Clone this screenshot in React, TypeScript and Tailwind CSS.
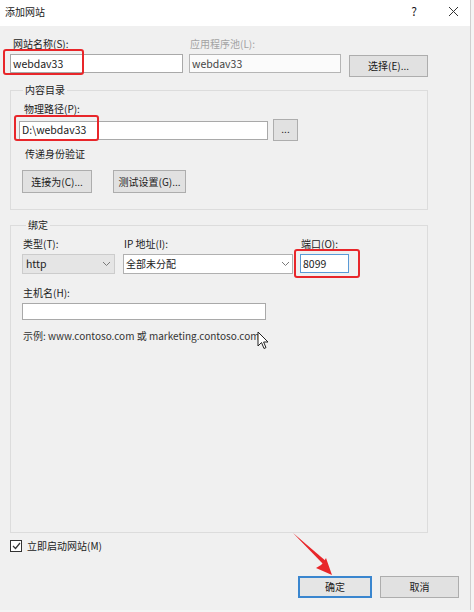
import React from "react";

const font = { fontFamily: '"Noto Sans CJK SC", "Noto Sans", sans-serif' };

function Btn({ children, className = "" }: { children: React.ReactNode; className?: string }) {
  return (
    <div
      className={
        "flex items-center justify-center border border-[#adadad] bg-[#e1e1e1] text-[10px] text-[#1a1a1a] " +
        className
      }
    >
      {children}
    </div>
  );
}

function Chevron() {
  return (
    <svg width="9" height="6" viewBox="0 0 9 6" className="text-[#7a7a7a]">
      <path d="M1 1 L4.5 4.5 L8 1" fill="none" stroke="currentColor" strokeWidth="1" />
    </svg>
  );
}

export default function App() {
  return (
    <div className="relative w-[474px] h-[612px] bg-[#f4f4f4] overflow-hidden text-[#1a1a1a]" style={font}>
      <div className="flex flex-col w-[471px] h-[610px] border-r border-[#cfcfcf]">
        {/* title bar */}
        <div className="flex items-center h-[26px] bg-white pl-[5px] text-[10px]">
          <span className="flex-1 pb-[4px]">添加网站</span>
          <span className="w-[10px] text-center text-[12px] pb-[4px] mr-[29px]">?</span>
          <svg width="11" height="11" viewBox="0 0 11 11" className="mr-[11px] mb-[4px]">
            <path d="M1 1 L10 10 M10 1 L1 10" stroke="#333" strokeWidth="1" />
          </svg>
        </div>

        {/* body */}
        <div className="flex-1 bg-[#f0f0f0] pl-[10px] pr-[11px] pt-[11px] text-[10px] leading-[14px] text-[#222]">
          {/* site name / pool */}
          <div className="flex items-start">
            <div className="w-[173px]">
              <div className="pl-[3px] h-[14px]">网站名称(S):</div>
              <div className="mt-[3px] h-[19px] border border-[#a9a9a9] bg-white pl-[2px] flex items-center text-[10.5px]">
                webdav33
              </div>
            </div>
            <div className="ml-[6px] w-[152px]">
              <div className="pl-[1px] h-[14px] text-[#a3a3a3]">应用程序池(L):</div>
              <div className="mt-[3px] h-[19px] border border-[#b5b5b5] bg-[#fbfbfb] pl-[2px] flex items-center text-[10.5px] text-[#444]">
                webdav33
              </div>
            </div>
            <Btn className="ml-[8px] mt-[18px] w-[79px] h-[22px]">选择(E)...</Btn>
          </div>

          {/* content directory */}
          <fieldset className="mt-[6px] w-[418px] border border-[#dcdcdc] pl-[8px] pb-[16px]">
            <legend className="ml-[4px] px-[2px] leading-[14px]">内容目录</legend>
            <div className="mt-[5px] pl-[5px] h-[14px]">物理路径(P):</div>
            <div className="mt-[3px] flex items-center">
              <div className="w-[249px] h-[19px] border border-[#a9a9a9] bg-white pl-[2px] flex items-center text-[10.5px]">
                D:\webdav33
              </div>
              <Btn className="ml-[5px] w-[25px] h-[22px] pb-[3px]">...</Btn>
            </div>
            <div className="mt-[6px] pl-[6px] h-[14px]">传递身份验证</div>
            <div className="mt-[9px] flex">
              <Btn className="ml-[3px] w-[70px] h-[23px]">连接为(C)...</Btn>
              <Btn className="ml-[21px] w-[73px] h-[23px]">测试设置(G)...</Btn>
            </div>
          </fieldset>

          {/* binding */}
          <fieldset className="mt-[8px] w-[418px] h-[315px] border border-[#dcdcdc] pl-[11px]">
            <legend className="ml-[4px] px-[2px] leading-[14px]">绑定</legend>
            <div className="mt-[5px] flex items-start">
              <div className="w-[93px]">
                <div className="pl-[1px] h-[14px]">类型(T):</div>
                <div className="mt-[3px] h-[20px] border border-[#cccccc] bg-[#e5e5e5] pl-[3px] pr-[3px] flex items-center justify-between text-[10.5px]">
                  <span>http</span>
                  <Chevron />
                </div>
              </div>
              <div className="ml-[8px] w-[170px]">
                <div className="pl-[1px] h-[14px]">IP 地址(I):</div>
                <div className="mt-[3px] h-[20px] border border-[#b0b0b0] bg-white pl-[2px] pr-[2px] flex items-center justify-between">
                  <span>全部未分配</span>
                  <Chevron />
                </div>
              </div>
              <div className="ml-[7px] w-[49px]">
                <div className="pl-[1px] h-[14px]">端口(O):</div>
                <div className="mt-[3px] h-[19px] border border-[#5a9ad6] bg-white pl-[2px] flex items-center text-[10.5px]">
                  8099
                </div>
              </div>
            </div>
            <div className="mt-[12px] pl-[1px] h-[14px]">主机名(H):</div>
            <div className="mt-[3px] w-[244px] h-[17px] border border-[#a9a9a9] bg-white" />
            <div className="mt-[9px] pl-[1px] h-[14px] text-[#333]">示例: www.contoso.com 或 marketing.contoso.com</div>
          </fieldset>

          {/* start checkbox */}
          <div className="mt-[7px] flex items-center h-[12px]">
            <div className="w-[12px] h-[12px] border border-[#333] bg-white flex items-center justify-center">
              <svg width="9" height="8" viewBox="0 0 9 8">
                <path d="M1 4 L3.5 6.5 L8 1" fill="none" stroke="#333" strokeWidth="1.2" />
              </svg>
            </div>
            <span className="ml-[5px]">立即启动网站(M)</span>
          </div>

          {/* action buttons */}
          <div className="mt-[24px] flex justify-end">
            <Btn className="w-[74px] h-[22px] !border-[#3a86cf] border-[2px] !bg-[#e5e5e5]">确定</Btn>
            <Btn className="ml-[8px] w-[79px] h-[22px]">取消</Btn>
          </div>
        </div>
      </div>

      {/* annotation boxes */}
      <div className="absolute left-[3px] top-[49px] w-[81px] h-[26px] border-2 border-[#e8262a] rounded-[3px]" />
      <div className="absolute left-[14px] top-[115px] w-[85px] h-[26px] border-2 border-[#e8262a] rounded-[3px]" />
      <div className="absolute left-[294px] top-[249px] w-[66px] h-[29px] border-2 border-[#e8262a] rounded-[3px]" />

      {/* red arrow */}
      <svg className="absolute left-[285px] top-[528px]" width="56" height="52" viewBox="0 0 56 52">
        <path d="M8 5 L40 36 L42 34 Z" fill="#e8262a" />
        <path d="M47 47 L31 40 L36 37 L38 35 L41 30 Z" fill="#e8262a" />
        <path d="M8 5 L41 35 L39 37 Z" fill="#e8262a" />
      </svg>

      {/* mouse cursor */}
      <svg className="absolute left-[257px] top-[331px]" width="12" height="19" viewBox="0 0 12 19">
        <path
          d="M1 1 L1 15 L4.5 11.5 L7 17.5 L9 16.6 L6.6 11 L11 11 Z"
          fill="white"
          stroke="#222"
          strokeWidth="1"
          strokeLinejoin="round"
        />
      </svg>
    </div>
  );
}
